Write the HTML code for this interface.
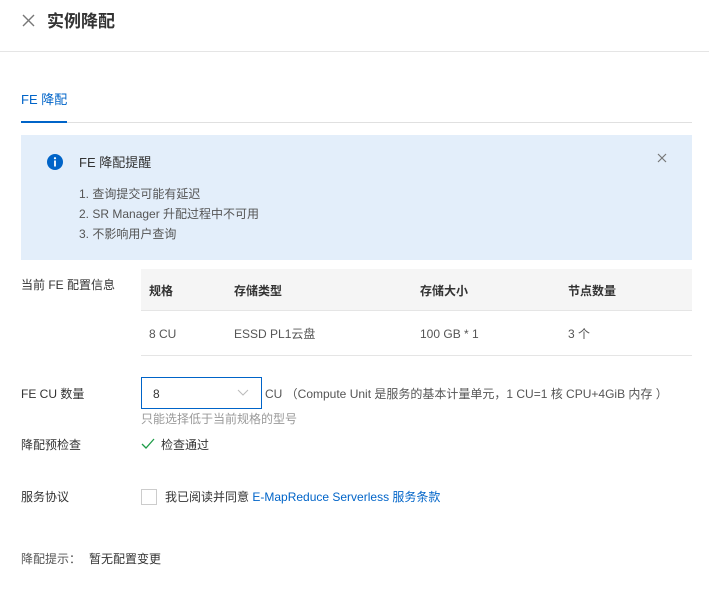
<!DOCTYPE html>
<html><head><meta charset="utf-8"><style>
*{margin:0;padding:0;box-sizing:border-box}
body{width:709px;height:590px;background:#fff;font-family:"Liberation Sans","Noto Sans CJK SC",sans-serif;font-size:12px;color:#333;position:relative;overflow:hidden}
.a{position:absolute;white-space:nowrap;line-height:16px}
</style></head><body>
<svg class="a" style="left:22px;top:14px" width="13" height="13" viewBox="0 0 13 13"><path d="M1 1L12 12M12 1L1 12" stroke="#777" stroke-width="1.4"/></svg>
<div class="a" style="left:47px;top:11px;font-size:17px;line-height:22px;font-weight:bold;color:#333">实例降配</div>
<div class="a" style="left:0;top:51px;width:709px;height:1px;background:#e5e5e5"></div>
<div class="a" style="left:21px;top:92px;font-size:13px;color:#0064c8">FE 降配</div>
<div class="a" style="left:21px;top:122px;width:671px;height:1px;background:#e0e0e0"></div>
<div class="a" style="left:21px;top:121px;width:46px;height:2px;background:#0064c8"></div>
<div class="a" style="left:21px;top:135px;width:671px;height:125px;background:#e3eefa"></div>
<svg class="a" style="left:46px;top:153px" width="18" height="18" viewBox="0 0 18 18"><circle cx="9" cy="9" r="8" fill="#0064c8"/><rect x="8.1" y="7.5" width="1.8" height="6" fill="#fff"/><circle cx="9" cy="5.2" r="1.1" fill="#fff"/></svg>
<div class="a" style="left:79px;top:155px;font-size:13px;color:#333">FE 降配提醒</div>
<svg class="a" style="left:657px;top:153px" width="10" height="10" viewBox="0 0 10 10"><path d="M1 1L9 9M9 1L1 9" stroke="#777" stroke-width="1.2"/></svg>
<div class="a" style="left:79px;top:186px;color:#555">1. 查询提交可能有延迟</div>
<div class="a" style="left:79px;top:206px;color:#555">2. SR Manager 升配过程中不可用</div>
<div class="a" style="left:79px;top:226px;color:#555">3. 不影响用户查询</div>
<div class="a" style="left:21px;top:277px">当前 FE 配置信息</div>
<div class="a" style="left:141px;top:269px;width:551px;height:42px;background:#f5f5f5;border-bottom:1px solid #e5e5e5"></div>
<div class="a" style="left:141px;top:355px;width:551px;height:1px;background:#e5e5e5"></div>
<div class="a" style="left:149px;top:283px;font-weight:bold">规格</div>
<div class="a" style="left:234px;top:283px;font-weight:bold">存储类型</div>
<div class="a" style="left:420px;top:283px;font-weight:bold">存储大小</div>
<div class="a" style="left:568px;top:283px;font-weight:bold">节点数量</div>
<div class="a" style="left:149px;top:326px;color:#555">8 CU</div>
<div class="a" style="left:234px;top:326px;color:#555">ESSD PL1云盘</div>
<div class="a" style="left:420px;top:326px;color:#555">100 GB * 1</div>
<div class="a" style="left:568px;top:326px;color:#555">3 个</div>
<div class="a" style="left:21px;top:386px">FE CU 数量</div>
<div class="a" style="left:141px;top:377px;width:121px;height:32px;border:1px solid #0064c8"></div>
<div class="a" style="left:153px;top:386px;color:#333">8</div>
<svg class="a" style="left:237px;top:389px" width="12" height="8" viewBox="0 0 12 8"><path d="M1 1L6 6L11 1" stroke="#bbb" fill="none" stroke-width="1"/></svg>
<div class="a" style="left:265px;top:386px;color:#555">CU （Compute Unit 是服务的基本计量单元，1 CU=1 核 CPU+4GiB 内存 ）</div>
<div class="a" style="left:141px;top:411px;color:#999">只能选择低于当前规格的型号</div>
<div class="a" style="left:21px;top:437px">降配预检查</div>
<svg class="a" style="left:141px;top:438px" width="14" height="12" viewBox="0 0 14 12"><path d="M1 6L5 10L13 1" stroke="#1e9c48" fill="none" stroke-width="1.3"/></svg>
<div class="a" style="left:161px;top:437px;color:#333">检查通过</div>
<div class="a" style="left:21px;top:489px">服务协议</div>
<div class="a" style="left:141px;top:489px;width:16px;height:16px;border:1px solid #ccc;background:#fff"></div>
<div class="a" style="left:165px;top:489px;color:#333">我已阅读并同意 <span style="color:#0064c8">E-MapReduce Serverless 服务条款</span></div>
<div class="a" style="left:21px;top:551px;color:#555">降配提示：</div>
<div class="a" style="left:89px;top:551px;color:#333">暂无配置变更</div>
</body></html>
